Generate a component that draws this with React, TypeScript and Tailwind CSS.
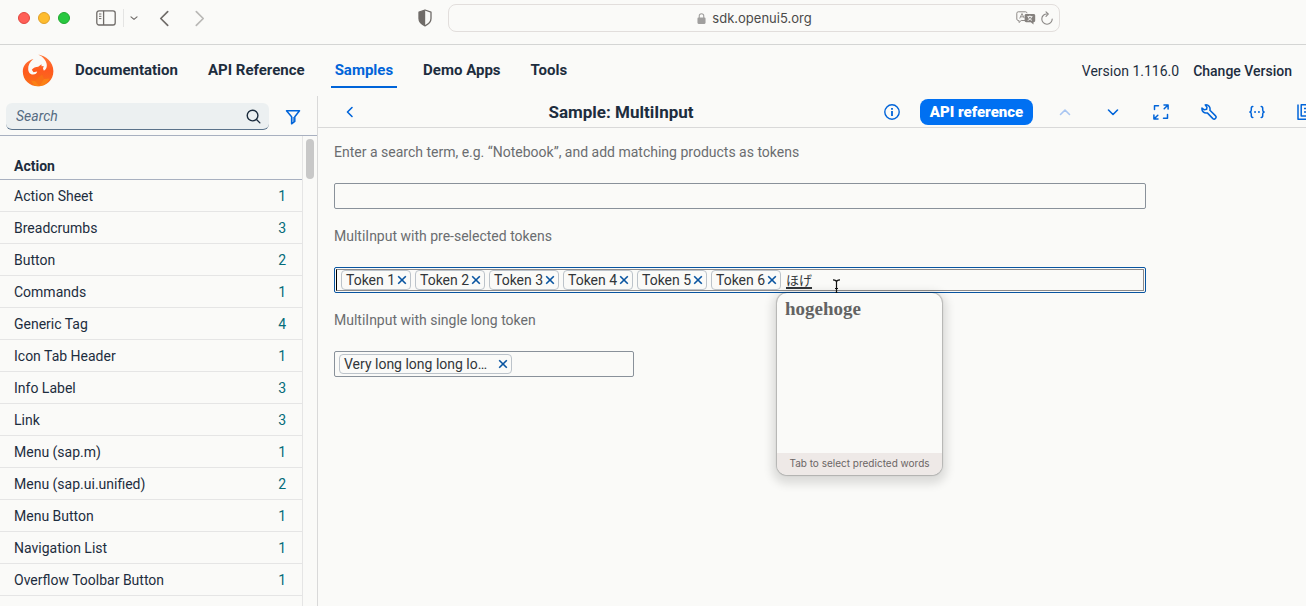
import type { ReactNode } from "react";

const samples: [string, number][] = [
  ["Action Sheet", 1],
  ["Breadcrumbs", 3],
  ["Button", 2],
  ["Commands", 1],
  ["Generic Tag", 4],
  ["Icon Tab Header", 1],
  ["Info Label", 3],
  ["Link", 3],
  ["Menu (sap.m)", 1],
  ["Menu (sap.ui.unified)", 2],
  ["Menu Button", 1],
  ["Navigation List", 1],
  ["Overflow Toolbar Button", 1],
];

const tabs = ["Documentation", "API Reference", "Samples", "Demo Apps", "Tools"];

const tokens = ["Token 1", "Token 2", "Token 3", "Token 4", "Token 5", "Token 6"];

function Chevron({ d, className }: { d: string; className: string }) {
  return (
    <svg viewBox="0 0 16 16" className={className} fill="none" stroke="currentColor" strokeWidth="1.6" strokeLinecap="round" strokeLinejoin="round" aria-hidden="true">
      <path d={d} />
    </svg>
  );
}

function PhoenixLogo() {
  return (
    <svg viewBox="0 0 32 33" className="h-[33px] w-8" aria-hidden="true">
      <defs>
        <linearGradient id="phoenix" x1="0" y1="0" x2="0" y2="1">
          <stop offset="0" stopColor="#ff7a3c" />
          <stop offset="0.5" stopColor="#ff5a1f" />
          <stop offset="1" stopColor="#f9701a" />
        </linearGradient>
      </defs>
      <path
        fill="url(#phoenix)"
        d="M16.200 .4C23.500 1.800 31.400 7.500 31.400 17.200C31.400 25.800 24.600 32.300 16 32.300C7.500 32.300 .8 26 .8 17.500C.8 11.500 4.800 7 11.400 5C7.800 8 5.900 11.400 6.200 15.200C6.400 18.600 8.500 20.600 11 20.600C13.400 20.600 14.900 19.400 15.200 17.600L11.500 18.200L9.800 15.800C11.300 13.800 13.600 12.700 16.200 12.700L19.500 10.200L19.500 12.200L21.700 11.900L21 14.500L21.900 16.800C24.300 15.400 25.200 12.900 24.700 10C24 6 21 2.600 16.200 .4Z"
      />
      <path fill="#fb8a12" d="M9 26.500L13 27L20 20.500L22 25L27.500 24.500C25.300 29.500 21 32.300 16 32.300C13.200 32.300 10.800 30.500 9 26.500Z" opacity=".7" />
      <path fill="#f4511e" d="M13 27L17.500 32.200L22 25L20 20.500Z" opacity=".3" />
    </svg>
  );
}

function IconButton({ label, children, className = "w-8", disabled }: { label: string; children: ReactNode; className?: string; disabled?: boolean }) {
  return (
    <button type="button" aria-label={label} disabled={disabled} className={`flex h-6 shrink-0 items-center justify-center text-[#0064d9] disabled:text-[#a9c6f2] ${className}`}>
      {children}
    </button>
  );
}

function Token({ text, className = "" }: { text: string; className?: string }) {
  return (
    <li className={`flex h-5 shrink-0 items-center justify-between rounded border border-[#bcc3ca] pr-[3px] pl-1 whitespace-nowrap ${className}`}>
      <span>{text}</span>
      <button type="button" aria-label={`Remove ${text}`} className="text-[#0854a0]">
        <svg viewBox="0 0 10 10" className="size-[10px]" fill="none" stroke="currentColor" strokeWidth="1.600" aria-hidden="true">
          <path d="M1.200 1.200L8.800 8.800M8.800 1.200L1.200 8.800" />
        </svg>
      </button>
    </li>
  );
}

function BrowserBar() {
  return (
    <div className="flex h-[45px] items-start border-b border-[#d4d5d4] text-[#6f6b68]">
      <div className="flex h-9 w-[448px] shrink-0 items-center pl-[18px]">
        <div className="flex gap-2">
          <span className="size-3 rounded-full border border-[#e2463f] bg-[#ff5f57]" />
          <span className="size-3 rounded-full border border-[#e0a028] bg-[#febc2e]" />
          <span className="size-3 rounded-full border border-[#1fa82f] bg-[#28c840]" />
        </div>
        <button type="button" aria-label="Show sidebar" className="ml-[26px]">
          <svg viewBox="0 0 20 16" className="h-4 w-5" fill="none" stroke="currentColor" strokeWidth="1.300" aria-hidden="true">
            <rect x=".8" y=".8" width="18.400" height="14.200" rx="2.200" />
            <path d="M7.600 .8V15" />
            <path d="M3 4H5.400M3 6.300H5.400M3 8.600H5.400" strokeWidth="1" />
          </svg>
        </button>
        <span className="ml-[7px] h-[18px] w-px bg-[#e4e4e3]" />
        <button type="button" aria-label="Tab groups" className="ml-1">
          <Chevron d="M4 6.500L8 9.800L12 6.500" className="size-3" />
        </button>
        <button type="button" aria-label="Back" className="ml-4">
          <Chevron d="M11 1.500L4.500 8L11 14.500" className="size-[17px]" />
        </button>
        <button type="button" aria-label="Forward" disabled className="ml-[18px] text-[#b9b8b6]">
          <Chevron d="M5 1.500L11.500 8L5 14.500" className="size-[17px]" />
        </button>
        <button type="button" aria-label="Privacy report" className="mr-[15px] ml-auto">
          <svg viewBox="0 0 14 18" className="h-[18px] w-4" aria-hidden="true">
            <path d="M7 1L13 3.200V9.500C13 12.800 10.300 15.300 7 16.800C3.700 15.300 1 12.800 1 9.500V3.200Z" fill="none" stroke="currentColor" strokeWidth="1.300" strokeLinejoin="round" />
            <path d="M7.200 1L1 3.200V9.500C1 12.800 3.700 15.300 7.200 16.800Z" fill="currentColor" />
          </svg>
        </button>
      </div>
      <div className="mt-1 flex h-7 max-w-[612px] flex-1 items-center rounded-lg border border-[#e2dedc] pr-1">
        <div className="flex flex-1 items-center justify-center gap-[6px] pl-11 font-['Inter',sans-serif] text-[13px] text-[#4b4a49]">
          <svg viewBox="0 0 10 13" className="h-[13px] w-[9px]" aria-hidden="true">
            <rect x=".5" y="5.500" width="9" height="7" rx="1.200" fill="#a09f9e" />
            <path d="M2.500 6V3.500C2.500 .4 7.500 .4 7.500 3.500V6" fill="none" stroke="#a09f9e" strokeWidth="1.200" />
          </svg>
          <span>sdk.openui5.org</span>
        </div>
        <button type="button" aria-label="Translate" className="mr-1">
          <svg viewBox="0 0 20 14" className="h-[14px] w-5" fill="none" aria-hidden="true">
            <path d="M9 9.500H5.200L3 11.500V9.500H2.200C1.400 9.500 .8 8.900 .8 8.100V2.200C.8 1.400 1.400 .8 2.200 .8H9.600C10.400 .8 11 1.400 11 2.200" stroke="#8f8b88" strokeWidth="1" />
            <path d="M3.700 7.500L6 2.500L8.100 7M4.500 5.800H7.300" stroke="#8f8b88" strokeWidth=".9" />
            <path d="M10.200 3H17.500C18.600 3 19.200 3.700 19.200 4.600V9.600C19.200 10.500 18.600 11.200 17.500 11.200V13.500L14.800 11.200H10.200C9.200 11.200 8.600 10.500 8.600 9.600V4.600C8.600 3.700 9.200 3 10.200 3Z" fill="#85817e" />
            <path d="M11.400 5.600H16.500M13.900 4.500V5.600M12.300 6C12.800 7.800 14.500 9 16 9.300M15.600 6C15 7.800 13.300 9 11.700 9.400" stroke="#fafaf8" strokeWidth=".9" />
          </svg>
        </button>
        <button type="button" aria-label="Reload" className="mr-px">
          <svg viewBox="0 0 14 14" className="size-[14px]" fill="none" stroke="#8a8785" strokeWidth="1.100" strokeLinecap="round" aria-hidden="true">
            <path d="M7.500 3C4.200 2.700 1.800 5 1.800 8C1.800 10.900 4.100 13.200 7 13.200C9.900 13.200 12.200 10.900 12.200 8" />
            <path d="M6 .8L8.300 3.100L6 5.400" />
          </svg>
        </button>
      </div>
    </div>
  );
}

function SiteHeader() {
  return (
    <header className="flex h-[51px] items-center text-[15px] text-[#1d2d3e]">
      <a href="#home" aria-label="OpenUI5" className="ml-[22px]">
        <PhoenixLogo />
      </a>
      <nav className="ml-[17px] flex gap-[22px] self-start font-bold">
        {tabs.map((tab) => (
          <a
            key={tab}
            href={`#${tab}`}
            className={`flex h-[43px] items-center border-b-2 px-1 pt-2 whitespace-nowrap ${tab === "Samples" ? "border-[#0064d9] text-[#0064d9]" : "border-transparent"}`}
          >
            {tab}
          </a>
        ))}
      </nav>
      <div className="ml-auto flex items-center gap-[14px] pr-[14px] text-[14px] whitespace-nowrap">
        <span>Version 1.116.0</span>
        <button type="button" className="font-medium">Change Version</button>
      </div>
    </header>
  );
}

function Sidebar() {
  return (
    <aside className="flex w-[318px] shrink-0 flex-col border-r border-[#d9d9d9]">
      <div className="flex h-10 shrink-0 items-center border-b border-[#a8b0c0] pt-[2px] pr-4 pl-[6px]">
        <label className="flex h-[27px] flex-1 items-center rounded-md border-b border-[#5b738b] bg-[#ecf0f1] pr-2 pl-[10px]">
          <input type="search" aria-label="Search" placeholder="Search" className="w-0 flex-1 outline-none placeholder:text-[#556b82] placeholder:italic" />
          <svg viewBox="0 0 16 16" className="size-[15px]" fill="none" stroke="#1d2d3e" strokeWidth="1.500" strokeLinecap="round" aria-hidden="true">
            <circle cx="7" cy="7" r="5.700" />
            <path d="M11.200 11.200L14.800 14.800" />
          </svg>
        </label>
        <button type="button" aria-label="Filter" className="ml-4 text-[#0064d9]">
          <svg viewBox="0 0 16 16" className="size-4" fill="none" stroke="currentColor" strokeWidth="1.500" strokeLinejoin="round" aria-hidden="true">
            <path d="M1.500 1.800H14.500L9.800 7.800V12.500L6.600 14.800V7.800Z" />
            <path d="M8.200 8V13" strokeWidth="1" />
          </svg>
        </button>
      </div>
      <div className="flex min-h-0 flex-1">
        <div className="min-w-0 flex-1 overflow-hidden border-r border-[#e5e5e5]">
          <h2 className="flex h-11 items-end border-b border-[#a8b0c0] px-[14px] pb-[3px] font-bold">Action</h2>
          <ul>
            {samples.map(([name, count]) => (
              <li key={name}>
                <a href={`#${name}`} className="flex h-8 items-center justify-between border-b border-[#e5e5e5] pr-4 pl-[14px]">
                  <span>{name}</span>
                  <span className="text-[#046c7a]">{count}</span>
                </a>
              </li>
            ))}
          </ul>
        </div>
        <div className="w-[14px] px-[3px] py-[3px]">
          <div className="h-10 rounded-full bg-[#c8c8c8]" />
        </div>
      </div>
    </aside>
  );
}

function SampleToolbar() {
  return (
    <div className="flex h-8 shrink-0 items-center border-b border-[#d9d9d9] pl-4">
      <IconButton label="Back">
        <Chevron d="M10 3.500L5.500 8L10 12.500" className="size-4" />
      </IconButton>
      <h1 className="flex-1 pr-1 text-center text-[17px] font-bold">Sample: MultiInput</h1>
      <div className="flex shrink-0 items-center gap-4">
        <IconButton label="Information" className="w-6">
          <svg viewBox="0 0 16 16" className="size-4" fill="none" stroke="currentColor" strokeWidth="1.400" aria-hidden="true">
            <circle cx="8" cy="8" r="7.200" />
            <path d="M8 7V12" strokeWidth="1.800" />
            <path d="M8 4V5.800" strokeWidth="1.800" />
          </svg>
        </IconButton>
        <button type="button" className="h-[26px] w-[113px] rounded-lg bg-[#0070f2] text-[15px] font-black whitespace-nowrap text-white">API reference</button>
        <IconButton label="Previous sample" disabled>
          <Chevron d="M3.500 10.500L8 6L12.500 10.500" className="size-4" />
        </IconButton>
        <IconButton label="Next sample">
          <Chevron d="M3.500 6L8 10.500L12.500 6" className="size-4" />
        </IconButton>
        <IconButton label="Full screen">
          <svg viewBox="0 0 16 16" className="size-4" fill="none" stroke="currentColor" strokeWidth="1.500" strokeLinejoin="round" strokeLinecap="round" aria-hidden="true">
            <path d="M5.500 1.700H1.500V5.500M14.500 10.500V14.300H10.500" />
            <path d="M11 .9H15.100V5M15 1L11.200 4.800M5 15.100H.9V11M1 15L4.800 11.200" />
          </svg>
        </IconButton>
        <IconButton label="Settings">
          <svg viewBox="0 0 16 16" className="size-4" fill="none" stroke="currentColor" strokeWidth="1.500" strokeLinejoin="round" strokeLinecap="round" aria-hidden="true">
            <path d="M4.200 .9L6 3.200L5.600 5.300L3.300 5.800L1 4C.5 7.200 3 9.600 6.300 8.900L11.900 14.600C13.600 16.100 16.100 13.600 14.600 11.900L8.900 6.300C9.700 3.200 7.500 .4 4.200 .9Z" />
          </svg>
        </IconButton>
        <IconButton label="Show code">
          <svg viewBox="0 0 16 16" className="size-4" fill="none" stroke="currentColor" strokeWidth="1.500" strokeLinejoin="round" strokeLinecap="round" aria-hidden="true">
            <path d="M3.800 2.500C2.400 2.500 2.300 3.500 2.300 4.500V6C2.300 7.200 1.800 7.800 .9 8C1.800 8.200 2.300 8.800 2.300 10V11.500C2.300 12.500 2.400 13.500 3.800 13.500M12.200 2.500C13.600 2.500 13.700 3.500 13.700 4.500V6C13.700 7.200 14.200 7.800 15.100 8C14.200 8.200 13.700 8.800 13.700 10V11.500C13.700 12.500 13.600 13.500 12.200 13.500" />
            <path d="M6 8H6.100M9.900 8H10" strokeWidth="1.800" />
          </svg>
        </IconButton>
        <IconButton label="Open in new window" className="w-[17px] justify-start overflow-hidden pl-2">
          <svg viewBox="0 0 16 16" className="size-4 shrink-0" fill="none" stroke="currentColor" strokeWidth="1.500" strokeLinejoin="round" aria-hidden="true">
            <path d="M1 .5V15.200H12" />
            <path d="M4.200 .8H15V12H4.200ZM7 4.500H12M7 8H12" />
          </svg>
        </IconButton>
      </div>
    </div>
  );
}

function SampleForm() {
  return (
    <div className="flex max-w-[844px] flex-col px-4 text-[#6a6d70]">
      <label htmlFor="products" className="mt-[15px] h-[18px] leading-[18px]">Enter a search term, e.g. “Notebook”, and add matching products as tokens</label>
      <input id="products" type="text" className="mt-[22px] h-[26px] rounded-xs border border-[#89919a] px-2 outline-none" />
      <label htmlFor="preselected" className="mt-[18px] h-[18px] leading-[18px]">MultiInput with pre-selected tokens</label>
      <div className="mt-[22px] flex h-[26px] rounded-xs border border-[#0854a0] p-px text-[#32363a]">
        <div className="flex min-w-0 flex-1 items-center border border-[#8d8b8c] border-l-black pl-1">
          <ul className="flex gap-1">
            {tokens.map((token) => (
              <Token key={token} text={token} className="w-[70px]" />
            ))}
          </ul>
          <div className="relative ml-[5px] min-w-0 flex-1">
            <input
              id="preselected"
              type="text"
              defaultValue="ほげ"
              className="block h-5 w-full font-['Noto_Sans_CJK_JP',sans-serif] text-[13px] leading-5 underline decoration-2 underline-offset-2 outline-none"
            />
            <svg viewBox="0 0 9 16" className="absolute top-[9px] left-[46px] h-4 w-[9px]" fill="none" stroke="#111" strokeWidth="1.200" aria-hidden="true">
              <path d="M1 .8C3 .8 4.500 1.300 4.500 3V13C4.500 14.700 3 15.200 1 15.200M8 .8C6 .8 4.500 1.300 4.500 3M4.500 13C4.500 14.700 6 15.200 8 15.200M3 9.500H6" />
            </svg>
            <div className="absolute top-[23px] left-[-9px] z-10 flex h-[182px] w-[165px] flex-col overflow-hidden rounded-[10px] bg-[#fafaf8] shadow-[0_0_1px_1px_rgba(0,0,0,0.2),0_4px_10px_5px_rgba(0,0,0,0.12)]">
              <div className="flex-1 px-2 pt-1 font-['Liberation_Serif',serif] text-[19px] leading-6 font-bold text-[#636363]">hogehoge</div>
              <div className="h-[22px] bg-[#eee9e7] text-center font-['Inter',sans-serif] text-[10px] leading-5 whitespace-nowrap text-[#6b6665]">Tab to select predicted words</div>
            </div>
          </div>
        </div>
      </div>
      <label htmlFor="longtoken" className="mt-[18px] h-[18px] leading-[18px]">MultiInput with single long token</label>
      <div className="mt-[22px] flex h-[26px] w-[300px] max-w-full items-center rounded-xs border border-[#89919a] pl-1 text-[#32363a]">
        <ul>
          <Token text="Very long long long lo…" className="w-[173px]" />
        </ul>
        <input id="longtoken" type="text" className="w-0 flex-1 outline-none" />
      </div>
    </div>
  );
}

export default function App() {
  return (
    <div className="flex h-screen flex-col overflow-hidden bg-[#fafaf8] font-['Roboto',sans-serif] text-[14px] leading-5 text-[#1d2d3e]">
      <BrowserBar />
      <SiteHeader />
      <div className="flex min-h-0 flex-1">
        <Sidebar />
        <main className="flex min-w-0 flex-1 flex-col overflow-hidden">
          <SampleToolbar />
          <SampleForm />
        </main>
      </div>
    </div>
  );
}
